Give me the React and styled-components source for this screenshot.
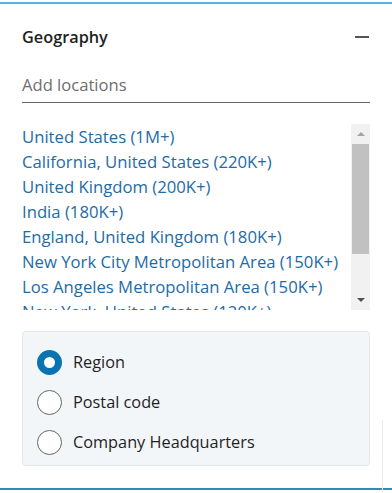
import React from "react"
import styled, { createGlobalStyle } from "styled-components"

const GlobalStyle = createGlobalStyle`
  html, body {
    margin: 0;
    padding: 0;
    background: #ffffff;
  }
  body {
    font-family: "Open Sans", "Noto Sans", sans-serif;
  }
`

const Frame = styled.div`
  position: relative;
  width: 392px;
  height: 493px;
  padding-top: 2px;
  box-sizing: border-box;
  overflow: hidden;
`

const Panel = styled.section`
  border-top: 2px solid #5ab3e3;
  border-bottom: 2px solid #2a8cb8;
  padding: 0 22px 22px 22px;
  display: flex;
  flex-direction: column;
`

const Header = styled.div`
  display: flex;
  align-items: center;
  justify-content: space-between;
  height: 24px;
  margin-top: 21px;
`

const Title = styled.h3`
  margin: 0;
  font-size: 16.3px;
  font-weight: 600;
  color: #1f1f1f;
`

const Collapse = styled.span`
  display: block;
  width: 14px;
  height: 2px;
  background: #555555;
  margin-right: 1px;
`

const Input = styled.input`
  margin-top: 17px;
  height: 37px;
  box-sizing: border-box;
  border: none;
  border-bottom: 1px solid #666666;
  padding: 0;
  font-family: "Open Sans", "Noto Sans", sans-serif;
  font-size: 16.6px;
  color: #333;
  background: transparent;
  outline: none;

  &::placeholder {
    color: #6e6e6e;
  }
`

const ListBox = styled.div`
  margin-top: 21px;
  height: 186px;
  display: flex;
  align-items: stretch;
`

const Items = styled.ul`
  flex: 1;
  margin: 0;
  padding: 0;
  list-style: none;
  overflow: hidden;
`

const Item = styled.li`
  height: 25px;
  line-height: 25px;
  font-size: 16.7px;
  color: #1e6ba6;
  white-space: nowrap;
`

const Scrollbar = styled.div`
  width: 19px;
  background: #f1f1f1;
  display: flex;
  flex-direction: column;
  align-items: center;
`

const Arrow = styled.span`
  height: 20px;
  display: flex;
  align-items: center;
  justify-content: center;
  &::before {
    content: "";
    border-left: 4px solid transparent;
    border-right: 4px solid transparent;
    ${(p) => (p.$up ? "border-bottom: 4px solid #a3a3a3;" : "border-top: 4px solid #505050;")}
  }
`

const Thumb = styled.div`
  width: 17px;
  height: 110px;
  background: #c1c1c1;
`

const Spacer = styled.div`
  flex: 1;
`

const Options = styled.div`
  margin-top: 21px;
  height: 135px;
  box-sizing: border-box;
  background: #f3f6f8;
  border: 1px solid #e4e7ea;
  border-radius: 4px;
  padding: 10px 14px 0 14px;
  display: flex;
  flex-direction: column;
`

const Option = styled.label`
  height: 40px;
  display: flex;
  align-items: center;
  gap: 11px;
  font-size: 16.3px;
  color: #1f1f1f;
  cursor: pointer;
`

const Radio = styled.span`
  width: 25px;
  height: 25px;
  box-sizing: border-box;
  border-radius: 50%;
  background: #ffffff;
  border: ${(p) => (p.$checked ? "7px solid #0a73b1" : "1.5px solid #666666")};
  flex-shrink: 0;
`

const EdgeLine = styled.div`
  position: absolute;
  left: 382px;
  top: 420px;
  width: 1px;
  height: 73px;
  background: #ececec;
`

const locations = [
  "United States (1M+)",
  "California, United States (220K+)",
  "United Kingdom (200K+)",
  "India (180K+)",
  "England, United Kingdom (180K+)",
  "New York City Metropolitan Area (150K+)",
  "Los Angeles Metropolitan Area (150K+)",
  "New York, United States (120K+)",
  "Texas, United States (110K+)",
]

const choices = ["Region", "Postal code", "Company Headquarters"]

export default function App() {
  const [selected, setSelected] = React.useState("Region")
  return (
    <>
      <GlobalStyle />
      <Frame>
        <Panel>
          <Header>
            <Title>Geography</Title>
            <Collapse />
          </Header>
          <Input placeholder="Add locations" />
          <ListBox>
            <Items>
              {locations.map((l) => (
                <Item key={l}>{l}</Item>
              ))}
            </Items>
            <Scrollbar>
              <Arrow $up />
              <Thumb />
              <Spacer />
              <Arrow />
            </Scrollbar>
          </ListBox>
          <Options>
            {choices.map((c) => (
              <Option key={c} onClick={() => setSelected(c)}>
                <Radio $checked={selected === c} />
                {c}
              </Option>
            ))}
          </Options>
        </Panel>
        <EdgeLine />
      </Frame>
    </>
  )
}
